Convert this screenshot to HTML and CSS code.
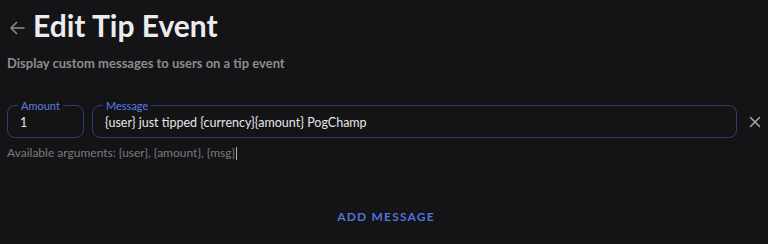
FILE: index.html
```html
<!DOCTYPE html>
<html>
<head>
<meta charset="utf-8">
<link rel="stylesheet" href="styles.css">
</head>
<body>
<div class="page">
  <div class="header">
    <svg class="back" width="16" height="14" viewBox="0 0 16 14"><path d="M15 7H2M7.5 1.5L2 7l5.5 5.5" fill="none" stroke="#8a8a8e" stroke-width="1.6" stroke-linecap="round" stroke-linejoin="round"/></svg>
    <h1 class="title">Edit Tip Event</h1>
  </div>
  <p class="subtitle">Display custom messages to users on a tip event</p>
  <div class="row">
    <fieldset class="field amount">
      <legend>Amount</legend>
      <div class="value">1</div>
    </fieldset>
    <fieldset class="field message">
      <legend>Message</legend>
      <div class="value">{user} just tipped {currency}{amount} PogChamp</div>
    </fieldset>
    <div class="close">
      <svg width="12" height="12" viewBox="0 0 12 12"><path d="M1.5 1.5l9 9M10.5 1.5l-9 9" stroke="#a8a8ac" stroke-width="1.5" stroke-linecap="round"/></svg>
    </div>
  </div>
  <div class="helper">Available arguments: {user}, {amount}, {msg}<span class="caret"></span></div>
  <div class="actions"><button class="add">ADD MESSAGE</button></div>
</div>
</body>
</html>
```
FILE: styles.css
```css
html, body {
  margin: 0;
  background: #141416;
}
body {
  font-family: Lato, "Noto Sans", sans-serif;
  color: #e8e8ea;
  width: 768px;
  height: 244px;
  overflow: hidden;
}
.page {
  padding: 0 3px 0 7px;
}
.header {
  display: flex;
  align-items: center;
  gap: 8px;
  height: 50px;
  padding-left: 2px;
}
.back {
  margin-top: 6px;
}
.title {
  margin: 0;
  font-size: 30px;
  font-weight: 700;
  color: #ececee;
}
.subtitle {
  margin: 5px 0 0;
  font-size: 13px;
  font-weight: 700;
  color: #8c8c90;
  line-height: 16px;
}
.row {
  display: flex;
  align-items: flex-end;
  gap: 8px;
  margin-top: 28px;
}
.field {
  margin: 0;
  border: 1px solid #2b3f73;
  border-radius: 8px;
  padding: 0 12px;
  height: 39px;
  box-sizing: border-box;
  min-width: 0;
}
.field legend {
  font-size: 11px;
  line-height: 13px;
  color: #5a7ee0;
  padding: 0 3px;
  margin-left: -2px;
}
.amount {
  width: 77px;
}
.message {
  flex: 1;
}
.value {
  font-size: 12.5px;
  line-height: 16px;
  color: #e6e6e8;
  padding-top: 3px;
}
.close {
  width: 20px;
  height: 32px;
  display: flex;
  align-items: center;
  justify-content: center;
}
.helper {
  margin-top: 8px;
  font-size: 12px;
  line-height: 14px;
  color: #7a7a7e;
  display: flex;
  align-items: center;
}
.caret {
  display: inline-block;
  width: 1px;
  height: 13px;
  background: #b0b0b4;
  margin-left: 1px;
}
.actions {
  display: flex;
  justify-content: center;
  margin-top: 45px;
}
.add {
  background: none;
  border: none;
  font-family: inherit;
  font-size: 12px;
  font-weight: 700;
  letter-spacing: 1.2px;
  color: #4f73d9;
  padding: 4px 8px;
}
```
